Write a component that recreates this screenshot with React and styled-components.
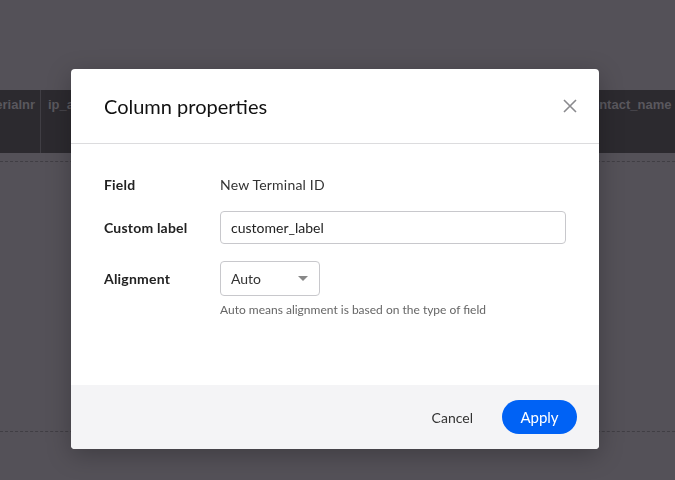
import React from "react";
import styled, { createGlobalStyle } from "styled-components";

const GlobalStyle = createGlobalStyle`
  html, body {
    margin: 0;
    padding: 0;
    height: 100%;
    background: #545158;
    font-family: "Lato", "Liberation Sans", sans-serif;
  }
  #root {
    height: 100%;
  }
`;

const Page = styled.div`
  height: 480px;
  padding-top: 90px;
  box-sizing: border-box;
  overflow: hidden;
`;

const HeaderRow = styled.div`
  display: grid;
  grid-template-columns: 41px 536px 1fr;
  height: 63px;
  background: #2c2a2f;
`;

const HeaderCell = styled.div`
  display: flex;
  justify-content: ${({ $end }) => ($end ? "flex-end" : "flex-start")};
  padding: 7px ${({ $end }) => ($end ? "5px" : "0")} 0 7px;
  overflow: hidden;
  white-space: nowrap;
  border-right: ${({ $divider }) => ($divider ? "1px solid #403e44" : "none")};
  font-family: "Liberation Sans", sans-serif;
  font-weight: bold;
  font-size: 13px;
  color: #5a585e;
`;

const DashedRow = styled.div`
  height: ${({ $h }) => $h}px;
  border-bottom: 1px dashed #403e44;
`;

const Overlay = styled.div`
  position: fixed;
  inset: 0;
  display: flex;
  align-items: flex-start;
  padding: 69px 0 0 71px;
`;

const Modal = styled.div`
  width: 528px;
  background: #fff;
  border-radius: 4px;
  overflow: hidden;
  box-shadow: 0 6px 24px rgba(0, 0, 0, 0.25);
`;

const ModalHeader = styled.div`
  display: flex;
  align-items: center;
  justify-content: space-between;
  height: 74px;
  padding: 0 22px 0 33px;
  border-bottom: 1px solid #dcdcde;
`;

const Title = styled.h2`
  margin: 0;
  font-size: 20px;
  font-weight: 400;
  color: #111;
`;

const CloseButton = styled.button`
  display: flex;
  padding: 0;
  border: none;
  background: none;
  cursor: pointer;
`;

const ModalBody = styled.div`
  height: 241px;
  box-sizing: border-box;
  padding: 29px 33px 0;
  display: flex;
  flex-direction: column;
  gap: 14px;
`;

const Row = styled.div`
  display: grid;
  grid-template-columns: 116px 1fr;
  align-items: ${({ $top }) => ($top ? "start" : "center")};
  margin-top: ${({ $mt }) => $mt || 0}px;
`;

const Label = styled.label`
  font-size: 14px;
  font-weight: 700;
  letter-spacing: 0.2px;
  color: #222;
  line-height: ${({ $lh }) => $lh || 24}px;
`;

const Value = styled.div`
  font-size: 14px;
  letter-spacing: 0.2px;
  color: #333;
  line-height: 24px;
`;

const Input = styled.input`
  box-sizing: border-box;
  width: 100%;
  height: 33px;
  padding: 0 10px;
  border: 1px solid #c8c8cc;
  border-radius: 4px;
  font-family: inherit;
  font-size: 14px;
  color: #222;
  outline: none;
`;

const SelectBox = styled.div`
  box-sizing: border-box;
  display: flex;
  align-items: center;
  justify-content: space-between;
  width: 100px;
  height: 35px;
  padding: 0 11px 0 10px;
  border: 1px solid #c8c8cc;
  border-radius: 4px;
  font-size: 14px;
  color: #333;
`;

const Caret = styled.span`
  width: 0;
  height: 0;
  border-left: 5px solid transparent;
  border-right: 5px solid transparent;
  border-top: 5px solid #888;
`;

const Hint = styled.div`
  margin-top: 6px;
  font-size: 12px;
  color: #666;
  line-height: 15px;
`;

const Footer = styled.div`
  display: flex;
  align-items: center;
  justify-content: flex-end;
  gap: 29px;
  height: 64px;
  padding: 0 22px;
  background: #f4f4f6;
`;

const TextButton = styled.button`
  padding: 0;
  border: none;
  background: none;
  font-family: inherit;
  font-size: 14px;
  color: #333;
  cursor: pointer;
`;

const PrimaryButton = styled.button`
  width: 75px;
  height: 34px;
  border: none;
  border-radius: 17px;
  background: #0062f5;
  color: #fff;
  font-family: inherit;
  font-size: 15px;
  cursor: pointer;
`;

const CloseIcon = () => (
  <svg width="14" height="14" viewBox="0 0 14 14">
    <path d="M1 1L13 13M13 1L1 13" stroke="#8a8a8e" strokeWidth="1.6" />
  </svg>
);

export default function App() {
  return (
    <>
      <GlobalStyle />
      <Page>
        <HeaderRow>
          <HeaderCell $end $divider>serialnr</HeaderCell>
          <HeaderCell>ip_address</HeaderCell>
          <HeaderCell>contact_name</HeaderCell>
        </HeaderRow>
        <DashedRow $h={8} />
        <DashedRow $h={269} />
      </Page>
      <Overlay>
        <Modal>
          <ModalHeader>
            <Title>Column properties</Title>
            <CloseButton aria-label="Close">
              <CloseIcon />
            </CloseButton>
          </ModalHeader>
          <ModalBody>
            <Row>
              <Label>Field</Label>
              <Value>New Terminal ID</Value>
            </Row>
            <Row>
              <Label>Custom label</Label>
              <Input defaultValue="customer_label" />
            </Row>
            <Row $top $mt={3}>
              <Label $lh={35}>Alignment</Label>
              <div>
                <SelectBox>
                  Auto
                  <Caret />
                </SelectBox>
                <Hint>Auto means alignment is based on the type of field</Hint>
              </div>
            </Row>
          </ModalBody>
          <Footer>
            <TextButton>Cancel</TextButton>
            <PrimaryButton>Apply</PrimaryButton>
          </Footer>
        </Modal>
      </Overlay>
    </>
  );
}
